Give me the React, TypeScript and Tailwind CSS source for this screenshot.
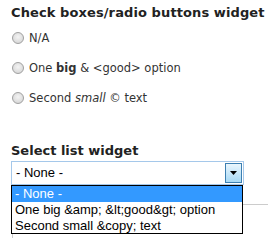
import React from "react";

function Radio() {
  return (
    <span className="inline-block w-[12px] h-[12px] rounded-full border border-[#a0a0a0] bg-[radial-gradient(circle_at_50%_40%,#f4f4f4,#d0d0d0)] shrink-0" />
  );
}

export default function App() {
  return (
    <div className="w-[268px] h-[238px] bg-white overflow-hidden relative" style={{ fontFamily: '"DejaVu Sans", Verdana, sans-serif' }}>
      <div className="pl-[11px] pt-[5px]">
        <div className="text-[13px] leading-[16px] font-bold text-[#222] tracking-[0.1px]">Check boxes/radio buttons widget</div>
        <div className="flex flex-col gap-[14px] mt-[9px] text-[11.5px] leading-[16px] text-[#333]">
          <div className="flex items-center gap-[5px] pl-[1px]"><Radio /><span>N/A</span></div>
          <div className="flex items-center gap-[5px] pl-[1px]"><Radio /><span>One <b>big</b> &amp; &lt;good&gt; option</span></div>
          <div className="flex items-center gap-[5px] pl-[1px]"><Radio /><span>Second <i>small</i> © text</span></div>
        </div>
        <div className="mt-[37px] text-[13px] leading-[16px] font-bold text-[#222]">Select list widget</div>
        <div className="mt-[2px] w-[233px] h-[24px] border border-[#a5c8ea] flex items-center justify-between bg-white">
          <span className="pl-[4px] text-[13px] text-black" style={{ fontFamily: '"Liberation Sans", Arial, sans-serif' }}>- None -</span>
          <span className="w-[17px] h-[20px] mr-[1px] border border-[#3c7fb1] bg-[linear-gradient(#eaf6fd,#a7d9f5)] flex items-center justify-center">
            <svg width="7" height="4" viewBox="0 0 7 4"><path d="M0 0H7L3.5 4Z" fill="#000" /></svg>
          </span>
        </div>
        <div className="mt-[19px] ml-[1px] h-[40px] border-t border-l border-[#cccccc]" />
      </div>
      <div className="absolute left-[11px] top-[185px] w-[232px] border border-black bg-white text-[13px] leading-[15px] text-black" style={{ fontFamily: '"Liberation Sans", Arial, sans-serif' }}>
        <div className="bg-[#3399ff] text-white pl-[3px] h-[16px]">- None -</div>
        <div className="pl-[3px] h-[16px]">One big &amp;amp; &amp;lt;good&amp;gt; option</div>
        <div className="pl-[3px] h-[15px]">Second small &amp;copy; text</div>
      </div>
    </div>
  );
}
